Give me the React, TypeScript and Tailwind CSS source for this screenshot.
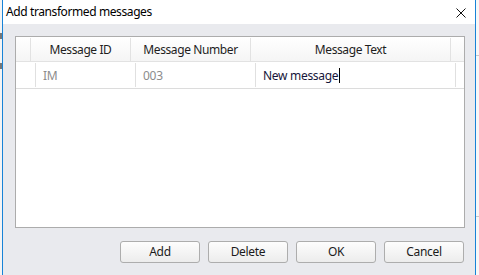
import React from 'react';

const font = { fontFamily: '"Noto Sans", "Open Sans", sans-serif' };

function DialogButton({ label }: { label: string }) {
  return (
    <button className="h-[22px] w-[80px] rounded-[3px] border border-[#adadad] bg-gradient-to-b from-[#fdfdfd] to-[#ececec] text-[12px] leading-none tracking-[-0.3px] text-[#1b1b1b]">
      {label}
    </button>
  );
}

export default function App() {
  return (
    <div className="flex h-[275px] w-[479px] overflow-hidden bg-white" style={font}>
      {/* window behind, left edge */}
      <div className="flex w-[2px] flex-col bg-[#f4f4f4]">
        <div className="mt-[33px] h-[6px] bg-[#777]" />
        <div className="mt-[24px] h-[6px] bg-[#777]" />
      </div>

      <div className="flex w-[474px] flex-col border-x border-[#1883d7]">
        {/* title bar */}
        <div className="flex h-[24px] items-center justify-between bg-white pl-[3px] pr-[9px]">
          <span className="text-[12px] tracking-[-0.4px] text-black">Add transformed messages</span>
          <svg width="10" height="10" viewBox="0 0 10 10" className="mt-[1px]">
            <path d="M0.5 0.5 L9.5 9.5 M9.5 0.5 L0.5 9.5" stroke="#111" strokeWidth="1" />
          </svg>
        </div>

        {/* body */}
        <div className="flex flex-1 flex-col bg-[#e9eaee] pl-[12px] pr-[10px] pt-[12px]">
          <div className="flex h-[192px] flex-col border border-[#acacac] bg-white">
            {/* header */}
            <div className="flex h-[25px] border-b border-[#e2e2e2] bg-gradient-to-b from-white to-[#f5f5f5] pt-[1px] text-[12px] tracking-[-0.4px] text-[#1e1e1e]">
              <div className="w-[15px] border-r border-[#e2e2e2]" />
              <div className="flex w-[100px] items-center justify-center border-r border-[#e2e2e2]">Message ID</div>
              <div className="flex w-[120px] items-center justify-center border-r border-[#e2e2e2]">Message Number</div>
              <div className="flex w-[200px] items-center justify-center border-r border-[#e2e2e2]">Message Text</div>
              <div className="flex-1" />
            </div>

            {/* row */}
            <div className="flex h-[27px] border-b border-[#dcdcdc] text-[12px] tracking-[-0.3px]">
              <div className="w-[20px] py-[1px]">
                <div className="h-full border-r border-[#e0e0e0]" />
              </div>
              <div className="flex w-[100px] items-center py-[1px]">
                <div className="flex h-full flex-1 items-center border-r border-[#e0e0e0] pl-[7px] pt-[1px] text-[#8c8c8c]">IM</div>
              </div>
              <div className="flex w-[120px] items-center py-[1px]">
                <div className="flex h-full flex-1 items-center border-r border-[#e0e0e0] pl-[7px] pt-[1px] text-[#8c8c8c]">003</div>
              </div>
              <div className="flex w-[200px] items-center py-[1px]">
                <div className="flex h-full flex-1 items-center border-r border-[#e0e0e0] pl-[7px] pt-[1px] text-[#16163a]">
                  New message
                  <span className="ml-[1px] h-[15px] w-[1px] bg-black" />
                </div>
              </div>
              <div className="flex-1" />
            </div>
          </div>

          {/* buttons */}
          <div className="mt-[13px] flex justify-end gap-[8px] pr-[1px]">
            <DialogButton label="Add" />
            <DialogButton label="Delete" />
            <DialogButton label="OK" />
            <DialogButton label="Cancel" />
          </div>
        </div>
      </div>

      {/* window behind, right edge */}
      <div className="flex w-[3px] flex-col bg-[#f7f7f7]">
        <div className="mt-[55px] h-[1px] bg-[#c8c8c8]" />
        <div className="mt-[160px] h-[1px] bg-[#c8c8c8]" />
      </div>
    </div>
  );
}
